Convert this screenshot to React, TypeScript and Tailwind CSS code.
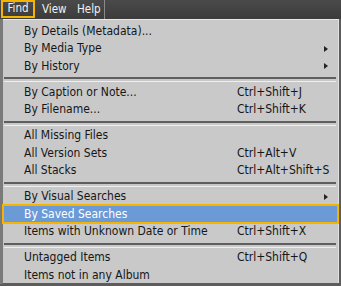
import { Fragment } from 'react'

type Item = { label: string; shortcut?: string; sub?: boolean; active?: boolean }

const groups: Item[][] = [
  [
    { label: 'By Details (Metadata)...' },
    { label: 'By Media Type', sub: true },
    { label: 'By History', sub: true },
  ],
  [
    { label: 'By Caption or Note...', shortcut: 'Ctrl+Shift+J' },
    { label: 'By Filename...', shortcut: 'Ctrl+Shift+K' },
  ],
  [
    { label: 'All Missing Files' },
    { label: 'All Version Sets', shortcut: 'Ctrl+Alt+V' },
    { label: 'All Stacks', shortcut: 'Ctrl+Alt+Shift+S' },
  ],
  [
    { label: 'By Visual Searches', sub: true },
    { label: 'By Saved Searches', active: true },
    { label: 'Items with Unknown Date or Time', shortcut: 'Ctrl+Shift+X' },
  ],
  [
    { label: 'Untagged Items', shortcut: 'Ctrl+Shift+Q' },
    { label: 'Items not in any Album' },
  ],
]

const font = { fontFamily: '"DejaVu Sans Condensed", "DejaVu Sans", Tahoma, sans-serif' }

function Row({ item }: { item: Item }) {
  return (
    <div
      className={
        'relative flex items-center h-[17.5px] text-[12px] ' +
        (item.active
          ? 'bg-[#6b9ad6] text-white outline-2 outline-[#f5b400] -outline-offset-1'
          : 'text-[#161616]')
      }
    >
      <span className="pl-[21px] w-[234px] whitespace-nowrap">{item.label}</span>
      {item.shortcut && <span className="whitespace-nowrap">{item.shortcut}</span>}
      {item.sub && (
        <span className="absolute right-[10px] top-[6px] w-0 h-0 border-y-[3px] border-y-transparent border-l-[4px] border-l-[#222]" />
      )}
    </div>
  )
}

export default function App() {
  return (
    <div className="w-[341px] h-[286px] bg-[#5c5c5c] overflow-hidden" style={font}>
      <div className="h-[19px] flex items-center bg-gradient-to-b from-[#4a4a4a] to-[#3c3c3c] text-[11.5px] text-[#f2f2f2]">
        <div className="ml-[1px] h-[18px] w-[34px] flex items-center justify-center border-2 border-[#f5b400] self-start">
          Find
        </div>
        <span className="ml-[7px] w-[21px] whitespace-nowrap">View</span>
        <span className="ml-[14px] w-[22px] whitespace-nowrap">Help</span>
        <div className="ml-[5px] w-px h-[19px] bg-[#8a8a8a]" />
      </div>
      <div className="flex">
        <div className="w-[3px] h-[265px] bg-[#7a7a7a]" />
        <div className="w-[336px] h-[264px] bg-[#c9c9c9] border-t border-[#e8e8e8] border-r border-r-[#e0e0e0] pt-[2px]">
          {groups.map((g, i) => (
            <Fragment key={i}>
              {i > 0 && (
                <div className="pt-[2.5px] pb-[1px] pl-[1px] pr-[2px]">
                  <div className="h-[2px] bg-[#5e5e5e]" />
                  <div className="h-[2px]" />
                  <div className="h-px bg-[#efefef]" />
                </div>
              )}
              {g.map(item => (
                <Row key={item.label} item={item} />
              ))}
            </Fragment>
          ))}
        </div>
      </div>
    </div>
  )
}
